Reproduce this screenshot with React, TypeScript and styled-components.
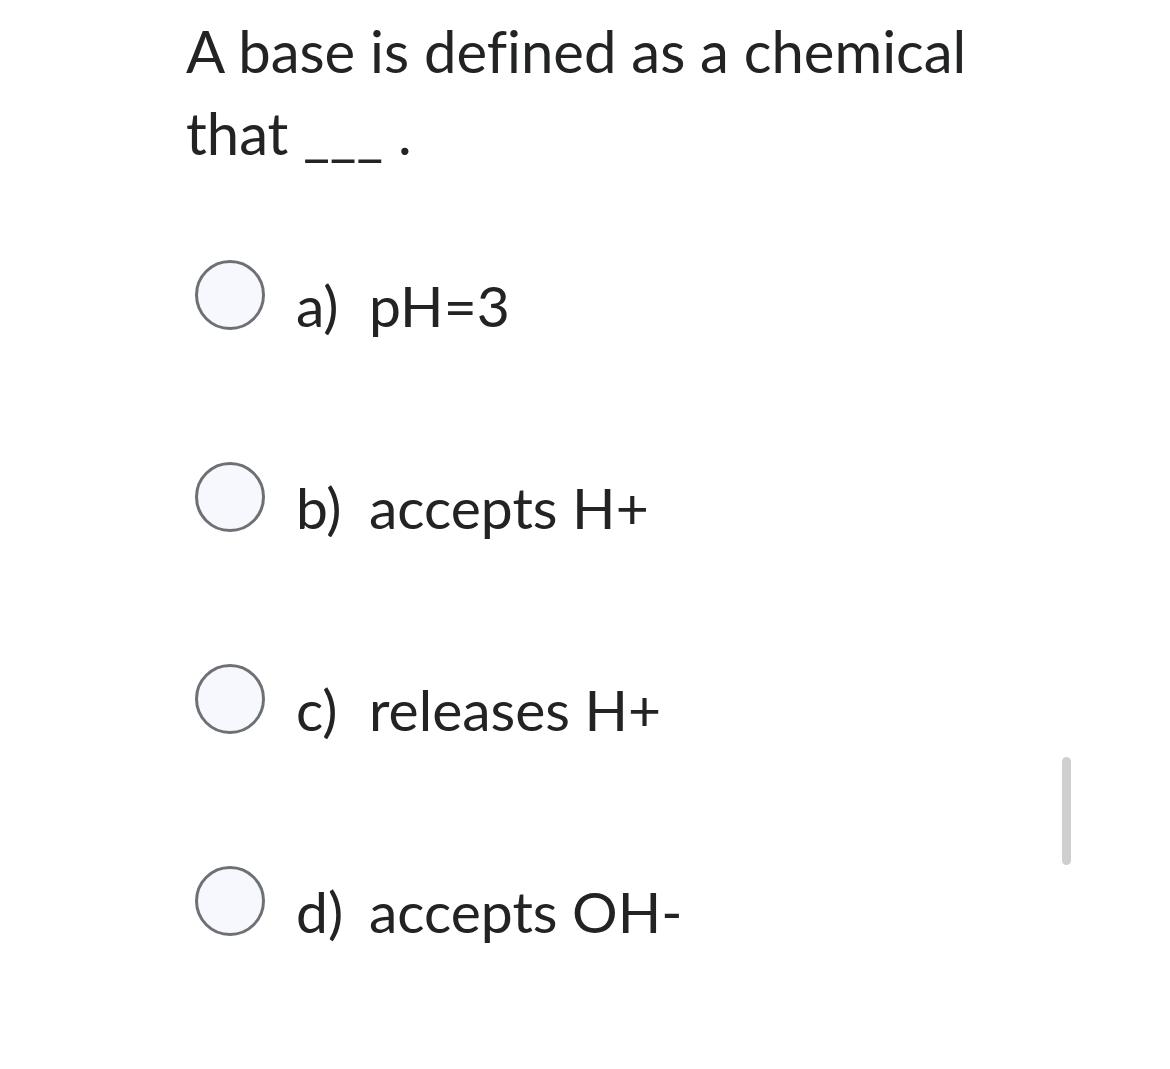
import React from "react";
import styled, { createGlobalStyle } from "styled-components";

const Global = createGlobalStyle`
  html, body { margin: 0; padding: 0; background: #ffffff; }
  body {
    font-family: Lato, "Open Sans", sans-serif;
    color: #222325;
    font-variant-ligatures: none;
  }
`;

const Page = styled.div`
  position: relative;
  width: 1170px;
  height: 1069px;
  box-sizing: border-box;
  padding: 10px 0 0 186px;
  overflow: hidden;
`;

const Question = styled.p`
  margin: 0;
  font-size: 58px;
  line-height: 82px;
  font-weight: 400;
  width: 820px;
`;

const Options = styled.div`
  display: flex;
  flex-direction: column;
  gap: 132px;
  margin-top: 86px;
  padding-left: 9px;
`;

const Row = styled.label`
  display: flex;
  align-items: flex-start;
  height: 70px;
`;

const Radio = styled.span`
  flex: none;
  box-sizing: border-box;
  width: 70px;
  height: 70px;
  border-radius: 50%;
  border: 3px solid #6e7174;
  background: #f6f8fd;
`;

const Letter = styled.span`
  display: inline-block;
  width: 73px;
`;

const Text = styled.span`
  margin-left: 31px;
  margin-top: 10px;
  font-size: 57px;
  line-height: 70px;
  white-space: nowrap;
`;

const Scrollbar = styled.div`
  position: absolute;
  left: 1062px;
  top: 757px;
  width: 9px;
  height: 108px;
  border-radius: 5px;
  background: #cfcfcf;
`;

const items = [
  { letter: "a)", text: "pH=3" },
  { letter: "b)", text: "accepts H+" },
  { letter: "c)", text: "releases H+" },
  { letter: "d)", text: "accepts OH-" },
];

export default function App() {
  return (
    <>
      <Global />
      <Page>
        <Question>A base is defined as a chemical that ___ .</Question>
        <Options>
          {items.map((it) => (
            <Row key={it.letter}>
              <Radio />
              <Text>
                <Letter>{it.letter}</Letter>
                {it.text}
              </Text>
            </Row>
          ))}
        </Options>
        <Scrollbar />
      </Page>
    </>
  );
}
